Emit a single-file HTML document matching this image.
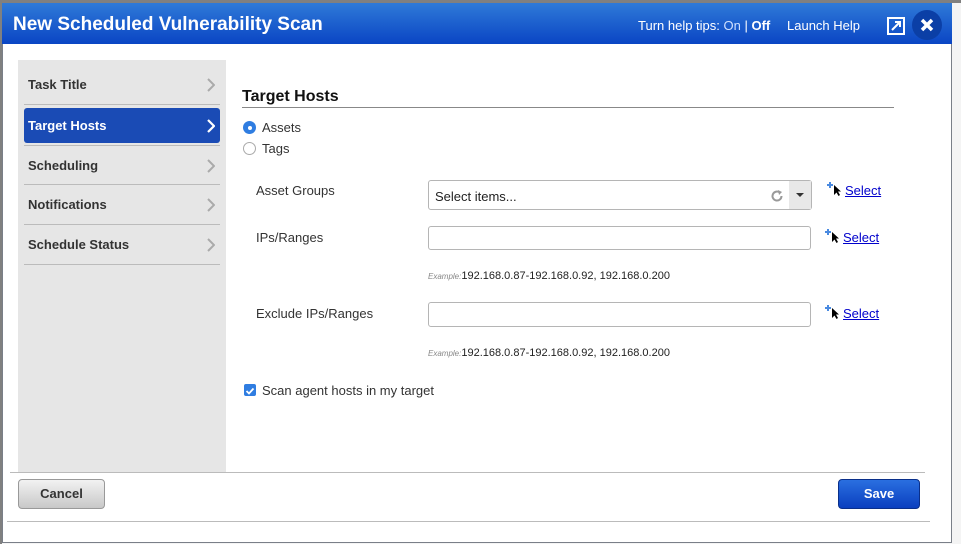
<!DOCTYPE html>
<html><head><style>
*{box-sizing:border-box;margin:0;padding:0}
body{width:961px;height:544px;background:#f4f4f4;font-family:"Liberation Sans",Arial,sans-serif;position:relative;overflow:hidden}
.abs{position:absolute}
#dlg{left:2px;top:3px;width:950px;height:540px;background:#fff;border:1px solid #7a7f88}
#frame{left:0;top:0;width:961px;height:3px;background:#808080}
#hdr{left:2px;top:3px;width:950px;height:41px;background:linear-gradient(#2f7ad8,#0a45c4);color:#fff}
#side{left:18px;top:60px;width:208px;height:412px;background:#e6e6e6}
.it{position:absolute;left:6px;width:196px;height:40px;border-bottom:1px solid #bbb;font-weight:bold;font-size:13px;color:#333;padding:12px 0 0 4px}
.it svg{position:absolute;right:5px;top:13px}
.lbl{font-size:13px;color:#333}
.inp{position:absolute;border:1px solid #b5b5b5;border-radius:3px;background:#fff}
.sel{position:absolute;font-size:13px;color:#00c;text-decoration:underline}
.ex{position:absolute;font-size:11px;color:#222}
.ex i{color:#888;font-size:8px}
.cur{position:absolute}
</style></head><body>
<div id="frame" class="abs"></div>
<div class="abs" style="left:0;top:0;width:2px;height:544px;background:#808080"></div>
<div id="dlg" class="abs"></div>
<div id="hdr" class="abs">
 <div class="abs" style="left:11px;top:11px;font-size:19px;font-weight:bold">New Scheduled Vulnerability Scan</div>
 <div class="abs" style="left:636px;top:15px;font-size:13px">Turn help tips: <span style="color:#cfe0ff">On</span> | <b>Off</b></div>
 <div class="abs" style="left:785px;top:15px;font-size:13px">Launch Help</div>
 <svg class="abs" style="left:885px;top:14px" width="18" height="18" viewBox="0 0 18 18"><rect x="1" y="1" width="16" height="16" fill="none" stroke="#fff" stroke-width="2"/><path d="M5 13 L13 5 M8 5 H13 V10" stroke="#fff" stroke-width="2" fill="none"/></svg>
 <div class="abs" style="left:910px;top:7px;width:30px;height:30px;border-radius:50%;background:#0b3fa6"><svg width="30" height="30"><path d="M10 10 L20 20 M20 10 L10 20" stroke="#fff" stroke-width="3.5"/></svg></div>
</div>
<div id="side" class="abs">
 <div class="it" style="top:5px">Task Title<svg width="8" height="14"><path d="M1 1 L7 7 L1 13" stroke="#aaa" stroke-width="2" fill="none"/></svg></div>
 <div class="it" style="top:45px;border:none;height:43px"><div class="abs" style="left:0;top:3px;width:196px;height:35px;background:#1a4bb5;border-radius:3px;color:#fff;padding:10px 0 0 4px">Target Hosts<svg width="8" height="14" style="top:11px"><path d="M1 1 L7 7 L1 13" stroke="#fff" stroke-width="2.2" fill="none"/></svg></div></div>
 <div class="it" style="top:85px;border-top:1px solid #bbb">Scheduling<svg width="8" height="14"><path d="M1 1 L7 7 L1 13" stroke="#aaa" stroke-width="2" fill="none"/></svg></div>
 <div class="it" style="top:125px">Notifications<svg width="8" height="14"><path d="M1 1 L7 7 L1 13" stroke="#aaa" stroke-width="2" fill="none"/></svg></div>
 <div class="it" style="top:165px">Schedule Status<svg width="8" height="14"><path d="M1 1 L7 7 L1 13" stroke="#aaa" stroke-width="2" fill="none"/></svg></div>
</div>
<div class="abs" style="left:242px;top:88px;font-size:16px;font-weight:bold;color:#111">Target Hosts</div>
<div class="abs" style="left:242px;top:107px;width:652px;height:1px;background:#888"></div>
<div class="abs" style="left:243px;top:121px;width:13px;height:13px;border-radius:50%;background:#2f7de1"><div class="abs" style="left:4.5px;top:4.5px;width:4px;height:4px;border-radius:50%;background:#fff"></div></div>
<div class="abs lbl" style="left:262px;top:120px">Assets</div>
<div class="abs" style="left:243px;top:142px;width:13px;height:13px;border-radius:50%;border:1px solid #aaa"></div>
<div class="abs lbl" style="left:262px;top:141px">Tags</div>
<div class="abs lbl" style="left:256px;top:183px">Asset Groups</div>
<div class="inp" style="left:428px;top:180px;width:384px;height:30px"><div class="abs" style="left:6px;top:8px;font-size:13px;color:#222">Select items...</div><svg class="abs" style="left:341px;top:8px" width="14" height="14"><path d="M11.5 7 A4.5 4.5 0 1 1 9.5 3.3" stroke="#999" stroke-width="2" fill="none"/><path d="M8 1 L12 3 L9 6Z" fill="#999"/></svg><div class="abs" style="right:0;top:0;width:22px;height:28px;background:#e8e8e8"><div class="abs" style="left:7px;top:12px;border:4px solid transparent;border-top:4px solid #333"></div></div></div>
<svg class="cur" style="left:826px;top:181px" width="18" height="16"><path d="M1 4 H7 M4 1 V7" stroke="#4a8ae0" stroke-width="2"/><path d="M8 4 L8 14 L10.5 11.5 L12.5 15 L14 14 L12 10.5 L15 10.5 Z" fill="#000"/></svg>
<div class="sel" style="left:845px;top:183px">Select</div>
<div class="abs lbl" style="left:256px;top:230px">IPs/Ranges</div>
<div class="inp" style="left:428px;top:226px;width:383px;height:24px"></div>
<svg class="cur" style="left:824px;top:228px" width="18" height="16"><path d="M1 4 H7 M4 1 V7" stroke="#4a8ae0" stroke-width="2"/><path d="M8 4 L8 14 L10.5 11.5 L12.5 15 L14 14 L12 10.5 L15 10.5 Z" fill="#000"/></svg>
<div class="sel" style="left:843px;top:230px">Select</div>
<div class="ex" style="left:428px;top:270px"><i>Example:</i>192.168.0.87-192.168.0.92, 192.168.0.200</div>
<div class="abs lbl" style="left:256px;top:306px">Exclude IPs/Ranges</div>
<div class="inp" style="left:428px;top:302px;width:383px;height:25px"></div>
<svg class="cur" style="left:824px;top:304px" width="18" height="16"><path d="M1 4 H7 M4 1 V7" stroke="#4a8ae0" stroke-width="2"/><path d="M8 4 L8 14 L10.5 11.5 L12.5 15 L14 14 L12 10.5 L15 10.5 Z" fill="#000"/></svg>
<div class="sel" style="left:843px;top:306px">Select</div>
<div class="ex" style="left:428px;top:347px"><i>Example:</i>192.168.0.87-192.168.0.92, 192.168.0.200</div>
<div class="abs" style="left:244px;top:384px;width:12px;height:12px;border-radius:2px;background:#2f7de1"><svg width="12" height="12"><path d="M2.5 6 L5 8.5 L9.5 3.5" stroke="#fff" stroke-width="1.8" fill="none"/></svg></div>
<div class="abs lbl" style="left:262px;top:383px">Scan agent hosts in my target</div>
<div class="abs" style="left:10px;top:472px;width:915px;height:1px;background:#bbb"></div>
<div class="abs" style="left:18px;top:479px;width:87px;height:30px;border:1px solid #999;border-radius:4px;background:linear-gradient(#f2f2f2,#c8c8c8);font-weight:bold;font-size:13px;color:#333;text-align:center;line-height:28px">Cancel</div>
<div class="abs" style="left:838px;top:479px;width:82px;height:30px;border:1px solid #0a2f8a;border-radius:4px;background:linear-gradient(#2a6fe0,#0a3fbf);font-weight:bold;font-size:13px;color:#fff;text-align:center;line-height:28px">Save</div>
<div class="abs" style="left:7px;top:521px;width:923px;height:1px;background:#bbb"></div>
</body></html>
